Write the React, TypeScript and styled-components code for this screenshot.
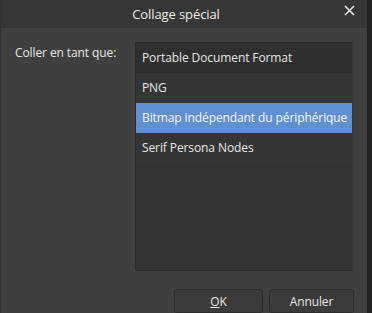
import React from "react";
import styled, { createGlobalStyle } from "styled-components";

const GlobalStyle = createGlobalStyle`
  html, body {
    margin: 0;
    padding: 0;
    background: #222222;
  }
  body {
    font-family: "Open Sans", "Noto Sans", sans-serif;
    font-size: 12px;
    letter-spacing: -0.1px;
    color: #e6e6e6;
  }
`;

const formats = [
  "Portable Document Format",
  "PNG",
  "Bitmap indépendant du périphérique",
  "Serif Persona Nodes",
];

export default function App() {
  return (
    <>
      <GlobalStyle />
      <Window>
        <TitleBar>
          <Title>Collage spécial</Title>
          <CloseButton aria-label="Fermer">
            <svg width="11" height="11" viewBox="0 0 11 11">
              <path d="M1 1L10 10M10 1L1 10" stroke="#e8e8e8" strokeWidth="1.6" />
            </svg>
          </CloseButton>
        </TitleBar>
        <Body>
          <Content>
            <Label>Coller en tant que:</Label>
            <List>
              {formats.map((f, i) => (
                <Row key={f} $selected={i === 2} $dark={i === 0}>
                  {f}
                </Row>
              ))}
            </List>
          </Content>
          <Buttons>
            <Button>
              <u>O</u>K
            </Button>
            <Button>Annuler</Button>
          </Buttons>
        </Body>
      </Window>
    </>
  );
}

const Window = styled.div`
  width: 367px;
  height: 313px;
  display: flex;
  flex-direction: column;
  background: #3f3f3f;
  border-left: 1px solid #333333;
  box-sizing: border-box;
  overflow: hidden;
`;

const TitleBar = styled.div`
  height: 28px;
  flex-shrink: 0;
  background: #363636;
  display: flex;
  align-items: center;
  justify-content: center;
  position: relative;
`;

const Title = styled.div`
  font-size: 13px;
  color: #ececec;
  padding-right: 16px;
`;

const CloseButton = styled.div`
  position: absolute;
  right: 12px;
  top: 5px;
  display: flex;
`;

const Body = styled.div`
  flex: 1;
  display: flex;
  flex-direction: column;
  padding: 14px 13px 0 14px;
`;

const Content = styled.div`
  display: flex;
  gap: 17px;
`;

const Label = styled.div`
  width: 103px;
  padding-top: 3px;
  line-height: 16px;
  white-space: nowrap;
`;

const List = styled.div`
  width: 218px;
  height: 229px;
  box-sizing: border-box;
  background: #333333;
  border: 1px solid #2a2a2a;
  border-right-color: #3a3a3a;
  border-bottom-color: #2b2b2b;
`;

const Row = styled.div<{ $selected?: boolean; $dark?: boolean }>`
  height: 30px;
  line-height: 30px;
  padding-left: 6px;
  white-space: nowrap;
  background: ${(p) => (p.$selected ? "#6190d0" : p.$dark ? "#2f2f2f" : "#353535")};
  color: ${(p) => (p.$selected ? "#f4f6fa" : "#e6e6e6")};
`;

const Buttons = styled.div`
  display: flex;
  justify-content: flex-end;
  gap: 6px;
  margin-top: 18px;
`;

const Button = styled.div`
  height: 24px;
  box-sizing: border-box;
  border: 1px solid #2c2c2c;
  border-radius: 3px;
  background: #3b3b3b;
  display: flex;
  align-items: center;
  justify-content: center;
  width: 89px;
  color: #e6e6e6;
  &:last-child {
    width: 85px;
  }
  u {
    text-decoration-thickness: 1px;
  }
`;
